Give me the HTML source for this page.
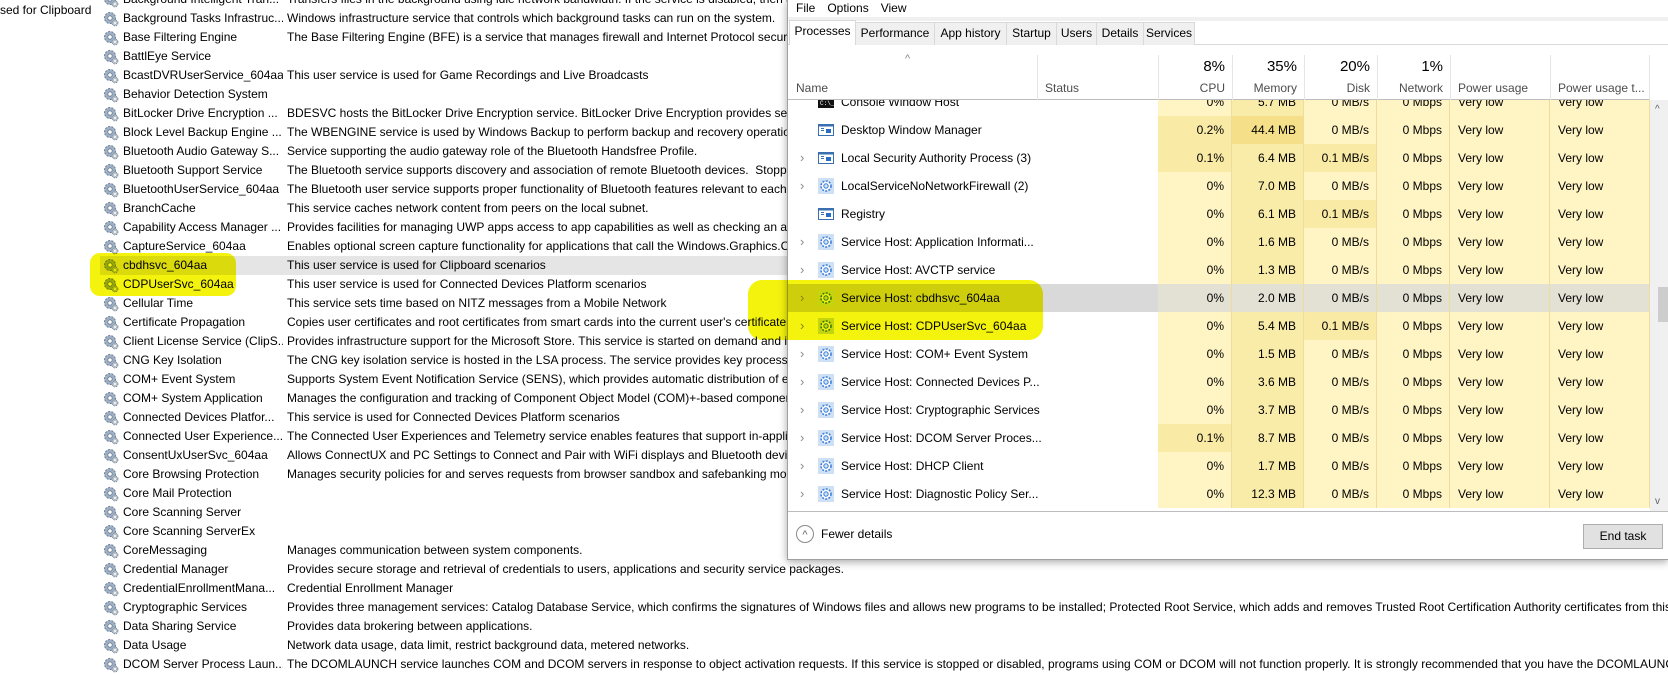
<!DOCTYPE html>
<html><head><meta charset="utf-8">
<style>
*{margin:0;padding:0;box-sizing:border-box}
body{width:1668px;height:669px;overflow:hidden;background:#fff;font-family:"Liberation Sans",sans-serif;font-size:12px;color:#000;position:relative}
.r{position:absolute;left:0;height:19px;width:1668px;line-height:19px;white-space:nowrap;overflow:hidden}
.r svg{position:absolute;left:103px;top:2px;width:16px;height:16px}
.n{position:absolute;left:123px;width:160px;overflow:hidden}
.d{position:absolute;left:287px;white-space:nowrap}
.hl{position:absolute;background:#f3f300;border-radius:10px;mix-blend-mode:multiply;opacity:.95}
#tm{position:absolute;left:787px;top:0;width:881px;height:560px;background:#fff;border-left:1px solid #a0a0a0;border-bottom:1px solid #a0a0a0;box-shadow:0 2px 8px rgba(0,0,0,.35);overflow:hidden}
.menu{position:absolute;top:0;left:8px;height:17px;line-height:16px}
.menu span{margin-right:12px}
.strip{position:absolute;top:17px;left:0;right:0;height:4px;background:#f0f0f0}
.tab{position:absolute;top:22px;height:23px;line-height:21px;text-align:center;background:#f0f0f0;border:1px solid #d9d9d9;border-bottom:none}
.tab.a{background:#fff;top:20px;height:25px;border-color:#d9d9d9}
.tabline{position:absolute;top:44px;left:0;right:0;height:1px;background:#d9d9d9}
.hd{position:absolute;top:45px;left:0;width:862px;height:55px;border-bottom:1px solid #bcbcbc}
.hc{position:absolute;top:10px;height:45px;border-left:1px solid #e5e5e5}
.pct{position:absolute;top:3px;font-size:15px;right:7px}
.lab{position:absolute;top:36px;color:#4d4d4d}
.hc .lab{top:26px}
.rows{position:absolute;top:100px;left:0;width:862px;height:411px;overflow:hidden}
.pr{position:absolute;left:0;width:862px;height:28px;line-height:28px}
.c{position:absolute;top:0;height:28px;text-align:right;padding-right:7px;background:#fff4c4;border-right:1px solid #f0dc9a}
.c.m{background:#f9eba8}
.c.dk{background:#f9eaa6}
.c.dk2{background:#f5df88}
.c.p{text-align:left;padding-left:8px}
.sel .c{background:#e3e0d4!important}
.sel{background:#d9d9d9}
.chev{position:absolute;left:12px;color:#8a8a8a;font-size:13px}
.ic{position:absolute;left:30px;top:6px;width:16px;height:16px}
.pn{position:absolute;left:53px}
.foot{position:absolute;top:511px;left:0;right:0;height:49px;border-top:1px solid #bcbcbc;background:#fff}
</style></head><body>
<svg width="0" height="0" style="position:absolute"><defs>
<symbol id="g" viewBox="0 0 16 16"><circle cx="7" cy="7" r="5.5" fill="#9fb0c4" stroke="#6a7c92" stroke-width="1" stroke-dasharray="2 1.4"/><circle cx="7" cy="7" r="2.2" fill="#fff" stroke="#6a7c92" stroke-width=".8"/><circle cx="12" cy="12" r="3" fill="#b8c2cc" stroke="#7b8794" stroke-width=".8" stroke-dasharray="1.4 1"/><circle cx="12" cy="12" r="1" fill="#fff"/></symbol>
<symbol id="gs" viewBox="0 0 16 16"><rect x="0" y="0" width="16" height="16" fill="#cfe0f4"/><circle cx="8" cy="8" r="5" fill="#fff" stroke="#3b7dd8" stroke-width="1.6" stroke-dasharray="2 1.3"/><circle cx="8" cy="8" r="2.2" fill="#cfe0f4" stroke="#3b7dd8" stroke-width="1"/></symbol>
<symbol id="w" viewBox="0 0 16 16"><rect x="0.5" y="2.5" width="15" height="11" fill="#fff" stroke="#3a6fb0"/><rect x="0.5" y="2.5" width="15" height="2" fill="#3a6fb0"/><rect x="8" y="7" width="5" height="4" fill="#2a6cc0"/><rect x="3" y="6" width="3" height="1" fill="#3a6fb0"/><rect x="3" y="8" width="3" height="1" fill="#3a6fb0"/></symbol>
</defs></svg>

<div style="position:absolute;left:0;top:1px;height:19px;line-height:19px">sed for Clipboard</div>

<div class="r" style="top:-10px"><svg><use href="#g"/></svg><span class="n">Background Intelligent Tran...</span><span class="d">Transfers files in the background using idle network bandwidth. If the service is disabled, then any applications that depend on BITS</span></div>
<div class="r" style="top:9px"><svg><use href="#g"/></svg><span class="n">Background Tasks Infrastruc...</span><span class="d">Windows infrastructure service that controls which background tasks can run on the system.</span></div>
<div class="r" style="top:28px"><svg><use href="#g"/></svg><span class="n">Base Filtering Engine</span><span class="d">The Base Filtering Engine (BFE) is a service that manages firewall and Internet Protocol security (IPsec) policies</span></div>
<div class="r" style="top:47px"><svg><use href="#g"/></svg><span class="n">BattlEye Service</span></div>
<div class="r" style="top:66px"><svg><use href="#g"/></svg><span class="n">BcastDVRUserService_604aa</span><span class="d">This user service is used for Game Recordings and Live Broadcasts</span></div>
<div class="r" style="top:85px"><svg><use href="#g"/></svg><span class="n">Behavior Detection System</span></div>
<div class="r" style="top:104px"><svg><use href="#g"/></svg><span class="n">BitLocker Drive Encryption ...</span><span class="d">BDESVC hosts the BitLocker Drive Encryption service. BitLocker Drive Encryption provides secure startup</span></div>
<div class="r" style="top:123px"><svg><use href="#g"/></svg><span class="n">Block Level Backup Engine ...</span><span class="d">The WBENGINE service is used by Windows Backup to perform backup and recovery operations</span></div>
<div class="r" style="top:142px"><svg><use href="#g"/></svg><span class="n">Bluetooth Audio Gateway S...</span><span class="d">Service supporting the audio gateway role of the Bluetooth Handsfree Profile.</span></div>
<div class="r" style="top:161px"><svg><use href="#g"/></svg><span class="n">Bluetooth Support Service</span><span class="d">The Bluetooth service supports discovery and association of remote Bluetooth devices.&nbsp; Stopping or disabling</span></div>
<div class="r" style="top:180px"><svg><use href="#g"/></svg><span class="n">BluetoothUserService_604aa</span><span class="d">The Bluetooth user service supports proper functionality of Bluetooth features relevant to each user session.</span></div>
<div class="r" style="top:199px"><svg><use href="#g"/></svg><span class="n">BranchCache</span><span class="d">This service caches network content from peers on the local subnet.</span></div>
<div class="r" style="top:218px"><svg><use href="#g"/></svg><span class="n">Capability Access Manager ...</span><span class="d">Provides facilities for managing UWP apps access to app capabilities as well as checking an app's access</span></div>
<div class="r" style="top:237px"><svg><use href="#g"/></svg><span class="n">CaptureService_604aa</span><span class="d">Enables optional screen capture functionality for applications that call the Windows.Graphics.Capture API.</span></div>
<div class="r" style="top:256px;background:#e5e5e5;left:100px;width:700px"></div>
<div class="r" style="top:256px"><svg><use href="#g"/></svg><span class="n">cbdhsvc_604aa</span><span class="d">This user service is used for Clipboard scenarios</span></div>
<div class="r" style="top:275px"><svg><use href="#g"/></svg><span class="n">CDPUserSvc_604aa</span><span class="d">This user service is used for Connected Devices Platform scenarios</span></div>
<div class="r" style="top:294px"><svg><use href="#g"/></svg><span class="n">Cellular Time</span><span class="d">This service sets time based on NITZ messages from a Mobile Network</span></div>
<div class="r" style="top:313px"><svg><use href="#g"/></svg><span class="n">Certificate Propagation</span><span class="d">Copies user certificates and root certificates from smart cards into the current user's certificate store</span></div>
<div class="r" style="top:332px"><svg><use href="#g"/></svg><span class="n">Client License Service (ClipS...</span><span class="d">Provides infrastructure support for the Microsoft Store. This service is started on demand and if disabled</span></div>
<div class="r" style="top:351px"><svg><use href="#g"/></svg><span class="n">CNG Key Isolation</span><span class="d">The CNG key isolation service is hosted in the LSA process. The service provides key process isolation</span></div>
<div class="r" style="top:370px"><svg><use href="#g"/></svg><span class="n">COM+ Event System</span><span class="d">Supports System Event Notification Service (SENS), which provides automatic distribution of events</span></div>
<div class="r" style="top:389px"><svg><use href="#g"/></svg><span class="n">COM+ System Application</span><span class="d">Manages the configuration and tracking of Component Object Model (COM)+-based components</span></div>
<div class="r" style="top:408px"><svg><use href="#g"/></svg><span class="n">Connected Devices Platfor...</span><span class="d">This service is used for Connected Devices Platform scenarios</span></div>
<div class="r" style="top:427px"><svg><use href="#g"/></svg><span class="n">Connected User Experience...</span><span class="d">The Connected User Experiences and Telemetry service enables features that support in-application</span></div>
<div class="r" style="top:446px"><svg><use href="#g"/></svg><span class="n">ConsentUxUserSvc_604aa</span><span class="d">Allows ConnectUX and PC Settings to Connect and Pair with WiFi displays and Bluetooth devices.</span></div>
<div class="r" style="top:465px"><svg><use href="#g"/></svg><span class="n">Core Browsing Protection</span><span class="d">Manages security policies for and serves requests from browser sandbox and safebanking modules.</span></div>
<div class="r" style="top:484px"><svg><use href="#g"/></svg><span class="n">Core Mail Protection</span></div>
<div class="r" style="top:503px"><svg><use href="#g"/></svg><span class="n">Core Scanning Server</span></div>
<div class="r" style="top:522px"><svg><use href="#g"/></svg><span class="n">Core Scanning ServerEx</span></div>
<div class="r" style="top:541px"><svg><use href="#g"/></svg><span class="n">CoreMessaging</span><span class="d">Manages communication between system components.</span></div>
<div class="r" style="top:560px"><svg><use href="#g"/></svg><span class="n">Credential Manager</span><span class="d">Provides secure storage and retrieval of credentials to users, applications and security service packages.</span></div>
<div class="r" style="top:579px"><svg><use href="#g"/></svg><span class="n">CredentialEnrollmentMana...</span><span class="d">Credential Enrollment Manager</span></div>
<div class="r" style="top:598px"><svg><use href="#g"/></svg><span class="n">Cryptographic Services</span><span class="d">Provides three management services: Catalog Database Service, which confirms the signatures of Windows files and allows new programs to be installed; Protected Root Service, which adds and removes Trusted Root Certification Authority certificates from this computer</span></div>
<div class="r" style="top:617px"><svg><use href="#g"/></svg><span class="n">Data Sharing Service</span><span class="d">Provides data brokering between applications.</span></div>
<div class="r" style="top:636px"><svg><use href="#g"/></svg><span class="n">Data Usage</span><span class="d">Network data usage, data limit, restrict background data, metered networks.</span></div>
<div class="r" style="top:655px"><svg><use href="#g"/></svg><span class="n">DCOM Server Process Laun...</span><span class="d">The DCOMLAUNCH service launches COM and DCOM servers in response to object activation requests. If this service is stopped or disabled, programs using COM or DCOM will not function properly. It is strongly recommended that you have the DCOMLAUNCH service running.</span></div>

<div class="hl" style="left:90px;top:253px;width:146px;height:43px"></div>

<div id="tm">
 <div class="menu"><span>File</span><span>Options</span><span>View</span></div>
 <div class="strip"></div>
 <div class="tabline"></div>
 <div class="tab a" style="left:1px;width:67px">Processes</div>
 <div class="tab" style="left:67px;width:80px">Performance</div>
 <div class="tab" style="left:146px;width:73px">App history</div>
 <div class="tab" style="left:218px;width:51px">Startup</div>
 <div class="tab" style="left:268px;width:41px">Users</div>
 <div class="tab" style="left:308px;width:48px">Details</div>
 <div class="tab" style="left:355px;width:52px">Services</div>
 <div class="hd">
  <div style="position:absolute;left:117px;top:8px;color:#888;font-size:11px">^</div>
  <div class="lab" style="left:8px">Name</div>
  <div class="hc" style="left:249px;width:121px"><div class="lab" style="left:7px">Status</div></div>
  <div class="hc" style="left:370px;width:74px"><div class="pct">8%</div><div class="lab" style="right:7px">CPU</div></div>
  <div class="hc" style="left:444px;width:72px"><div class="pct">35%</div><div class="lab" style="right:7px">Memory</div></div>
  <div class="hc" style="left:516px;width:73px"><div class="pct">20%</div><div class="lab" style="right:7px">Disk</div></div>
  <div class="hc" style="left:589px;width:73px"><div class="pct">1%</div><div class="lab" style="right:7px">Network</div></div>
  <div class="hc" style="left:662px;width:100px"><div class="lab" style="left:7px">Power usage</div></div>
  <div class="hc" style="left:762px;width:100px;border-right:1px solid #e5e5e5"><div class="lab" style="left:7px">Power usage t...</div></div>
 </div>
 <div class="rows">
  <div class="pr" style="top:-12px"><svg class="ic" viewBox="0 0 16 16"><rect x="0" y="2" width="16" height="12" fill="#111"/><text x="2" y="11" fill="#fff" font-size="6" font-family="Liberation Mono">C:\_</text></svg><span class="pn">Console Window Host</span><div class="c" style="left:370px;width:74px">0%</div><div class="c m" style="left:444px;width:72px">5.7 MB</div><div class="c" style="left:516px;width:73px">0 MB/s</div><div class="c" style="left:589px;width:73px">0 Mbps</div><div class="c p" style="left:662px;width:100px">Very low</div><div class="c p" style="left:762px;width:100px">Very low</div></div>
  <div class="pr" style="top:16px"><svg class="ic"><use href="#w"/></svg><span class="pn">Desktop Window Manager</span><div class="c dk" style="left:370px;width:74px">0.2%</div><div class="c dk2" style="left:444px;width:72px">44.4 MB</div><div class="c" style="left:516px;width:73px">0 MB/s</div><div class="c" style="left:589px;width:73px">0 Mbps</div><div class="c p" style="left:662px;width:100px">Very low</div><div class="c p" style="left:762px;width:100px">Very low</div></div>
  <div class="pr" style="top:44px"><span class="chev">›</span><svg class="ic"><use href="#w"/></svg><span class="pn">Local Security Authority Process (3)</span><div class="c dk" style="left:370px;width:74px">0.1%</div><div class="c m" style="left:444px;width:72px">6.4 MB</div><div class="c dk" style="left:516px;width:73px">0.1 MB/s</div><div class="c" style="left:589px;width:73px">0 Mbps</div><div class="c p" style="left:662px;width:100px">Very low</div><div class="c p" style="left:762px;width:100px">Very low</div></div>
  <div class="pr" style="top:72px"><span class="chev">›</span><svg class="ic"><use href="#gs"/></svg><span class="pn">LocalServiceNoNetworkFirewall (2)</span><div class="c" style="left:370px;width:74px">0%</div><div class="c m" style="left:444px;width:72px">7.0 MB</div><div class="c" style="left:516px;width:73px">0 MB/s</div><div class="c" style="left:589px;width:73px">0 Mbps</div><div class="c p" style="left:662px;width:100px">Very low</div><div class="c p" style="left:762px;width:100px">Very low</div></div>
  <div class="pr" style="top:100px"><svg class="ic"><use href="#w"/></svg><span class="pn">Registry</span><div class="c" style="left:370px;width:74px">0%</div><div class="c m" style="left:444px;width:72px">6.1 MB</div><div class="c dk" style="left:516px;width:73px">0.1 MB/s</div><div class="c" style="left:589px;width:73px">0 Mbps</div><div class="c p" style="left:662px;width:100px">Very low</div><div class="c p" style="left:762px;width:100px">Very low</div></div>
  <div class="pr" style="top:128px"><span class="chev">›</span><svg class="ic"><use href="#gs"/></svg><span class="pn">Service Host: Application Informati...</span><div class="c" style="left:370px;width:74px">0%</div><div class="c m" style="left:444px;width:72px">1.6 MB</div><div class="c" style="left:516px;width:73px">0 MB/s</div><div class="c" style="left:589px;width:73px">0 Mbps</div><div class="c p" style="left:662px;width:100px">Very low</div><div class="c p" style="left:762px;width:100px">Very low</div></div>
  <div class="pr" style="top:156px"><span class="chev">›</span><svg class="ic"><use href="#gs"/></svg><span class="pn">Service Host: AVCTP service</span><div class="c" style="left:370px;width:74px">0%</div><div class="c m" style="left:444px;width:72px">1.3 MB</div><div class="c" style="left:516px;width:73px">0 MB/s</div><div class="c" style="left:589px;width:73px">0 Mbps</div><div class="c p" style="left:662px;width:100px">Very low</div><div class="c p" style="left:762px;width:100px">Very low</div></div>
  <div class="pr sel" style="top:184px"><span class="chev">›</span><svg class="ic"><use href="#gs"/></svg><span class="pn">Service Host: cbdhsvc_604aa</span><div class="c" style="left:370px;width:74px">0%</div><div class="c m" style="left:444px;width:72px">2.0 MB</div><div class="c" style="left:516px;width:73px">0 MB/s</div><div class="c" style="left:589px;width:73px">0 Mbps</div><div class="c p" style="left:662px;width:100px">Very low</div><div class="c p" style="left:762px;width:100px">Very low</div></div>
  <div class="pr" style="top:212px"><span class="chev">›</span><svg class="ic"><use href="#gs"/></svg><span class="pn">Service Host: CDPUserSvc_604aa</span><div class="c" style="left:370px;width:74px">0%</div><div class="c m" style="left:444px;width:72px">5.4 MB</div><div class="c dk" style="left:516px;width:73px">0.1 MB/s</div><div class="c" style="left:589px;width:73px">0 Mbps</div><div class="c p" style="left:662px;width:100px">Very low</div><div class="c p" style="left:762px;width:100px">Very low</div></div>
  <div class="pr" style="top:240px"><span class="chev">›</span><svg class="ic"><use href="#gs"/></svg><span class="pn">Service Host: COM+ Event System</span><div class="c" style="left:370px;width:74px">0%</div><div class="c m" style="left:444px;width:72px">1.5 MB</div><div class="c" style="left:516px;width:73px">0 MB/s</div><div class="c" style="left:589px;width:73px">0 Mbps</div><div class="c p" style="left:662px;width:100px">Very low</div><div class="c p" style="left:762px;width:100px">Very low</div></div>
  <div class="pr" style="top:268px"><span class="chev">›</span><svg class="ic"><use href="#gs"/></svg><span class="pn">Service Host: Connected Devices P...</span><div class="c" style="left:370px;width:74px">0%</div><div class="c m" style="left:444px;width:72px">3.6 MB</div><div class="c" style="left:516px;width:73px">0 MB/s</div><div class="c" style="left:589px;width:73px">0 Mbps</div><div class="c p" style="left:662px;width:100px">Very low</div><div class="c p" style="left:762px;width:100px">Very low</div></div>
  <div class="pr" style="top:296px"><span class="chev">›</span><svg class="ic"><use href="#gs"/></svg><span class="pn">Service Host: Cryptographic Services</span><div class="c" style="left:370px;width:74px">0%</div><div class="c m" style="left:444px;width:72px">3.7 MB</div><div class="c" style="left:516px;width:73px">0 MB/s</div><div class="c" style="left:589px;width:73px">0 Mbps</div><div class="c p" style="left:662px;width:100px">Very low</div><div class="c p" style="left:762px;width:100px">Very low</div></div>
  <div class="pr" style="top:324px"><span class="chev">›</span><svg class="ic"><use href="#gs"/></svg><span class="pn">Service Host: DCOM Server Proces...</span><div class="c dk" style="left:370px;width:74px">0.1%</div><div class="c m" style="left:444px;width:72px">8.7 MB</div><div class="c" style="left:516px;width:73px">0 MB/s</div><div class="c" style="left:589px;width:73px">0 Mbps</div><div class="c p" style="left:662px;width:100px">Very low</div><div class="c p" style="left:762px;width:100px">Very low</div></div>
  <div class="pr" style="top:352px"><span class="chev">›</span><svg class="ic"><use href="#gs"/></svg><span class="pn">Service Host: DHCP Client</span><div class="c" style="left:370px;width:74px">0%</div><div class="c m" style="left:444px;width:72px">1.7 MB</div><div class="c" style="left:516px;width:73px">0 MB/s</div><div class="c" style="left:589px;width:73px">0 Mbps</div><div class="c p" style="left:662px;width:100px">Very low</div><div class="c p" style="left:762px;width:100px">Very low</div></div>
  <div class="pr" style="top:380px"><span class="chev">›</span><svg class="ic"><use href="#gs"/></svg><span class="pn">Service Host: Diagnostic Policy Ser...</span><div class="c" style="left:370px;width:74px">0%</div><div class="c m" style="left:444px;width:72px">12.3 MB</div><div class="c" style="left:516px;width:73px">0 MB/s</div><div class="c" style="left:589px;width:73px">0 Mbps</div><div class="c p" style="left:662px;width:100px">Very low</div><div class="c p" style="left:762px;width:100px">Very low</div></div>
 </div>
 <div style="position:absolute;left:862px;top:100px;width:19px;height:411px;background:#f0f0f0">
  <div style="position:absolute;top:4px;left:5px;color:#606060;font-size:10px">^</div>
  <div style="position:absolute;top:187px;left:8px;width:11px;height:35px;background:#cdcdcd"></div>
  <div style="position:absolute;bottom:4px;left:5px;color:#606060;font-size:10px">v</div>
 </div>
 <div class="foot">
  <div style="position:absolute;left:8px;top:13px;width:18px;height:18px;border:1px solid #8a8a8a;border-radius:50%;text-align:center;line-height:18px;color:#666;font-size:11px">^</div>
  <div style="position:absolute;left:33px;top:15px">Fewer details</div>
  <div style="position:absolute;left:795px;top:12px;width:80px;height:25px;background:#e1e1e1;border:1px solid #adadad;text-align:center;line-height:23px">End task</div>
 </div>
</div>

<div class="hl" style="left:748px;top:280px;width:295px;height:60px;border-radius:14px"></div>
</body></html>
